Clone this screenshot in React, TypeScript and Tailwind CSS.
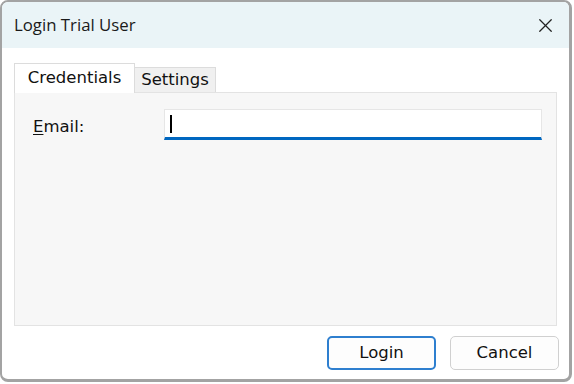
import { X } from "lucide-react";

const ui = { fontFamily: '"DejaVu Sans", Verdana, sans-serif' };
const title = { fontFamily: '"Open Sans", "Noto Sans", sans-serif' };

export default function App() {
  return (
    <div className="w-[574px] h-[384px] bg-white">
      <div className="w-[572px] h-[382px] rounded-[8px] border-2 border-[#a3a3a3] border-r-[3px] border-b-[3px] overflow-hidden flex flex-col bg-white">
        {/* title bar */}
        <div className="h-[46px] bg-[#eaf4f7] flex items-center justify-between pl-[12px] pr-[12px] shrink-0">
          <span className="text-[16.8px] text-[#1a1a1a]" style={title}>Login Trial User</span>
          <X className="w-[23px] h-[23px] text-[#222]" strokeWidth={1.3} />
        </div>

        <div className="flex-1 flex flex-col px-[12px] pt-[14px]" style={ui}>
          {/* tabs */}
          <div className="flex items-end h-[30px]">
            <div className="h-[30px] w-[121px] bg-white border border-b-0 border-[#dcdcdc] flex items-center justify-center text-[16.5px] text-[#111] relative top-[1px]">
              Credentials
            </div>
            <div className="h-[25px] w-[81px] bg-[#f0f0f0] border border-l-0 border-b-0 border-[#dcdcdc] flex items-center justify-center text-[16.5px] text-[#111]">
              Settings
            </div>
          </div>

          {/* panel */}
          <div className="h-[234px] w-[543px] bg-[#f7f7f7] border border-[#e3e3e3] pt-[16px] pl-[18px]">
            <div className="flex items-start">
              <span className="w-[131px] text-[16.5px] leading-[24px] pt-[6px] text-[#111]">
                <span className="underline underline-offset-2">E</span>mail:
              </span>
              <div className="w-[378px] h-[31px] bg-white border border-[#e6e6e6] border-b-[3px] border-b-[#0067c0] flex items-center pl-[5px]">
                <div className="w-[2px] h-[18px] bg-black" />
              </div>
            </div>
          </div>

          {/* buttons */}
          <div className="flex justify-end gap-[14px] pt-[10px] -mr-[2px]">
            <button className="w-[109px] h-[34px] rounded-[5px] border-2 border-[#2e7fcf] bg-[#fdfdfd] text-[16.5px] text-[#111]" style={ui}>
              Login
            </button>
            <button className="w-[109px] h-[34px] rounded-[5px] border border-[#d0d0d0] bg-[#fdfdfd] text-[16.5px] text-[#111]" style={ui}>
              Cancel
            </button>
          </div>
        </div>
      </div>
    </div>
  );
}
